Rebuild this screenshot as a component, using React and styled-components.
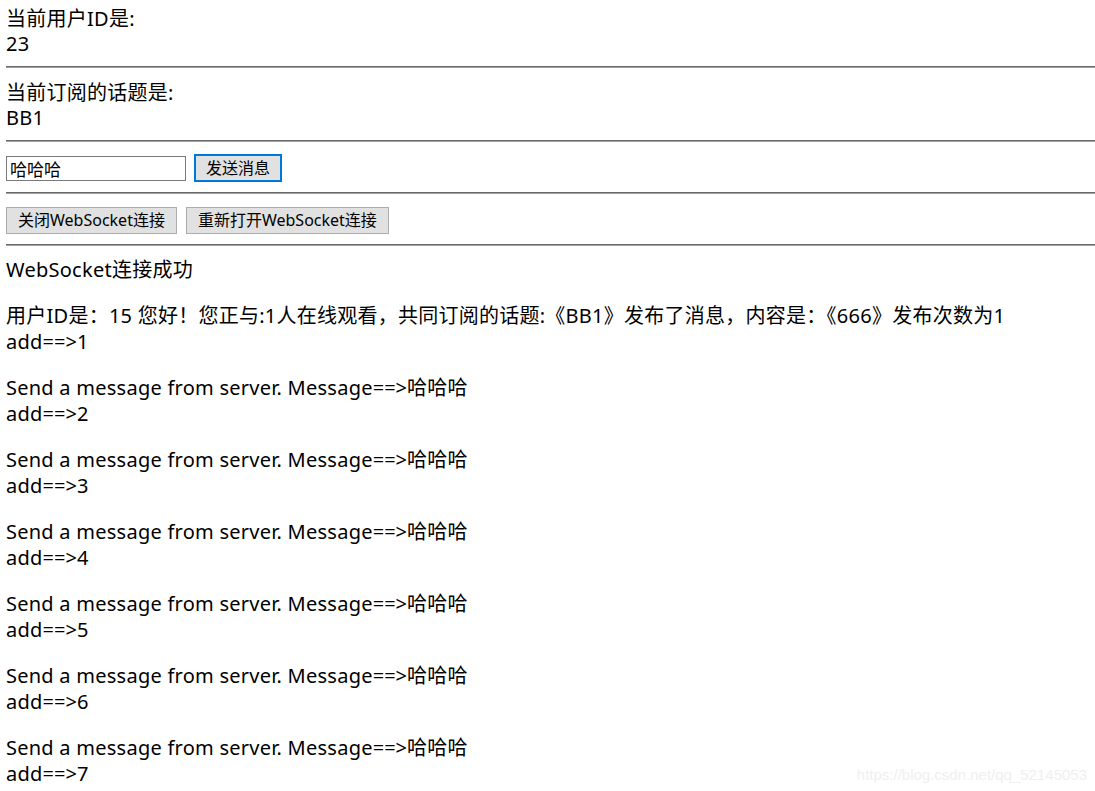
import React from "react";
import styled, { createGlobalStyle } from "styled-components";

const GlobalStyle = createGlobalStyle`
  html, body {
    background: #fff;
  }
  body {
    margin: 6px 0 0 6px;
    font-family: "Noto Sans", "Noto Sans CJK SC", sans-serif;
    font-size: 20px;
    line-height: 26px;
    letter-spacing: 0.25px;
    color: #000;
  }
`;

const Page = styled.div`
  position: relative;
  min-height: 780px;
`;

const Block = styled.div`
  line-height: 25px;
`;

const Rule = styled.hr`
  height: 0;
  margin: 10px 0 ${(p) => p.after || 12}px 0;
  border: none;
  border-top: 1px solid #6a6a6a;
  border-bottom: 1px solid #a0a0a0;
`;

const Row = styled.div`
  display: flex;
  align-items: center;
  gap: ${(p) => p.gap || 8}px;
  height: 28px;
`;

const TextInput = styled.input`
  box-sizing: border-box;
  width: 180px;
  height: 25px;
  margin: 0;
  padding: 0 3px;
  border: 1px solid #7a7a7a;
  font-family: "Noto Sans CJK SC", sans-serif;
  font-size: 17px;
  color: #000;
  outline: none;
`;

const Button = styled.button`
  box-sizing: border-box;
  height: ${(p) => (p.focused ? 28 : 27)}px;
  margin: 0;
  padding: 0 ${(p) => (p.focused ? 10 : 11)}px;
  background: #e1e1e1;
  border: ${(p) => (p.focused ? "2px solid #0078d7" : "1px solid #adadad")};
  font-family: "Noto Sans", "Noto Sans CJK SC", sans-serif;
  font-size: 16px;
  line-height: 20px;
  color: #000;
`;

const Message = styled.p`
  margin: 0 0 20px 0;
  line-height: 26px;
`;

const Arrow = styled.span`
  letter-spacing: 0;
`;

const Watermark = styled.div`
  position: absolute;
  right: 8px;
  top: 756px;
  font-family: "Liberation Sans", Arial, sans-serif;
  font-size: 15px;
  letter-spacing: 0;
  color: #efefef;
`;

const sends = [2, 3, 4, 5, 6, 7];

export default function App() {
  return (
    <Page>
      <GlobalStyle />
      <Block>
        当前用户ID是:
        <br />
        23
      </Block>
      <Rule />
      <Block>
        当前订阅的话题是:
        <br />
        BB1
      </Block>
      <Rule />
      <Row gap={8}>
        <TextInput defaultValue="哈哈哈" />
        <Button focused>发送消息</Button>
      </Row>
      <Rule />
      <Row gap={9}>
        <Button>关闭WebSocket连接</Button>
        <Button>重新打开WebSocket连接</Button>
      </Row>
      <Rule after={11} />
      <Message>WebSocket连接成功</Message>
      <Message>
        用户ID是：15 您好！您正与:1人在线观看，共同订阅的话题:《BB1》发布了消息，内容是：《666》发布次数为1
        <br />
        add<Arrow>==&gt;</Arrow>1
      </Message>
      {sends.map((n) => (
        <Message key={n}>
          Send a message from server. Message<Arrow>==&gt;</Arrow>哈哈哈
          <br />
          add<Arrow>==&gt;</Arrow>{n}
        </Message>
      ))}
      <Watermark>https://blog.csdn.net/qq_52145053</Watermark>
    </Page>
  );
}
